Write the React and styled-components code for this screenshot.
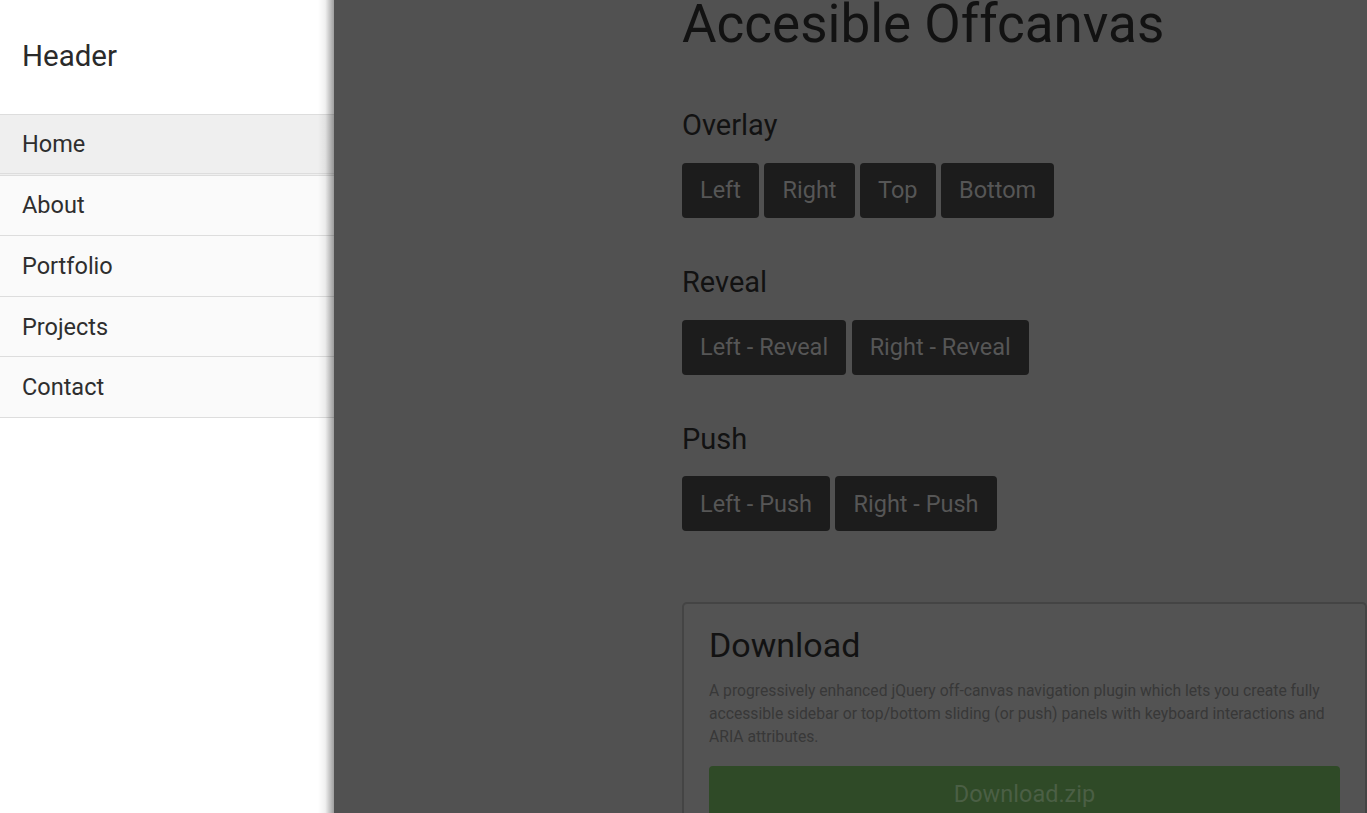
import React from "react";
import styled, { createGlobalStyle } from "styled-components";

const GlobalStyle = createGlobalStyle`
  html, body {
    margin: 0;
    height: 100%;
    overflow: hidden;
  }
  body {
    background: #515151;
    font-family: Roboto, "Liberation Sans", Arial, sans-serif;
  }
`;

//DATA
const menu = ["Home", "About", "Portfolio", "Projects", "Contact"];

const sections = [
  { title: "Overlay", buttons: ["Left", "Right", "Top", "Bottom"] },
  { title: "Reveal", buttons: ["Left - Reveal", "Right - Reveal"] },
  { title: "Push", buttons: ["Left - Push", "Right - Push"] },
];

const App = () => {
  return (
    <>
      <GlobalStyle />
      <Main>
        <Title>Accesible Offcanvas</Title>
        <Sections>
          {sections.map(s => (
            <section key={s.title}>
              <SectionTitle>{s.title}</SectionTitle>
              <ButtonRow>
                {s.buttons.map(b => (
                  <DemoButton key={b}>{b}</DemoButton>
                ))}
              </ButtonRow>
            </section>
          ))}
        </Sections>
        <Card>
          <CardTitle>Download</CardTitle>
          <CardText>
            A progressively enhanced jQuery off-canvas navigation plugin which
            lets you create fully accessible sidebar or top/bottom sliding (or
            push) panels with keyboard interactions and ARIA attributes.
          </CardText>
          <DownloadButton>Download.zip</DownloadButton>
        </Card>
      </Main>

      {/* offcanvas panel, open over the page */}
      <Panel>
        <PanelHeader>Header</PanelHeader>
        <Nav>
          {menu.map((m, i) => (
            <NavItem key={m} $active={i === 0}>
              {m}
            </NavItem>
          ))}
        </Nav>
      </Panel>
    </>
  );
};

export default App;

// STYLED COMPONENTS
const Main = styled.main`
  margin-left: 682px;
  display: flex;
  flex-direction: column;
`;

const Title = styled.h1`
  margin: -2px 0 0;
  font-size: 53px;
  line-height: 1;
  font-weight: 400;
  color: #121212;
`;

const Sections = styled.div`
  display: flex;
  flex-direction: column;
  gap: 47px;
  margin-top: 57px;
`;

const SectionTitle = styled.h2`
  margin: 0 0 20px;
  font-size: 29px;
  line-height: 1.2;
  font-weight: 400;
  color: #121212;
`;

const ButtonRow = styled.div`
  display: flex;
  gap: 5.5px;
`;

const DemoButton = styled.button`
  height: 55px;
  padding: 0 18px;
  border: none;
  border-radius: 4px;
  background: #1c1c1c;
  color: #565656;
  font-family: inherit;
  font-size: 23.5px;
`;

const Card = styled.div`
  margin-top: 71px;
  padding: 22px 25px 0;
  border: 2px solid #444444;
  border-bottom: none;
  border-radius: 5px 5px 0 0;
  background: #535353;
  height: 300px;
`;

const CardTitle = styled.h2`
  margin: 0 0 13px;
  font-size: 34px;
  line-height: 1.17;
  font-weight: 400;
  color: #121212;
`;

const CardText = styled.p`
  margin: 0 0 18px;
  font-size: 15.7px;
  line-height: 23px;
  color: #383838;
`;

const DownloadButton = styled.button`
  width: 100%;
  height: 55px;
  border: none;
  border-radius: 4px;
  background: #2f4a27;
  color: #4b5f45;
  font-family: inherit;
  font-size: 23.5px;
`;

const Panel = styled.aside`
  position: fixed;
  top: 0;
  left: 0;
  bottom: 0;
  width: 334px;
  background: #ffffff;

  &::after {
    content: "";
    position: absolute;
    top: 0;
    right: 0;
    bottom: 0;
    width: 16px;
    background: linear-gradient(
      to right,
      rgba(0, 0, 0, 0) 0%,
      rgba(0, 0, 0, 0.06) 45%,
      rgba(0, 0, 0, 0.38) 100%
    );
  }
`;

const PanelHeader = styled.div`
  height: 114px;
  box-sizing: border-box;
  padding: 39px 22px 0;
  font-size: 29.5px;
  color: #2a2a2a;
`;

const Nav = styled.nav`
  display: flex;
  flex-direction: column;
  border-top: 1px solid #dddddd;
`;

const NavItem = styled.a`
  display: flex;
  align-items: center;
  height: 60.6px;
  box-sizing: border-box;
  padding: 0 22px;
  font-size: 23.5px;
  color: #2e2e2e;
  background: ${p => (p.$active ? "#efefef" : "#fafafa")};
  border-bottom: ${p => (p.$active ? "3px double #dddddd" : "1px solid #dddddd")};
`;
